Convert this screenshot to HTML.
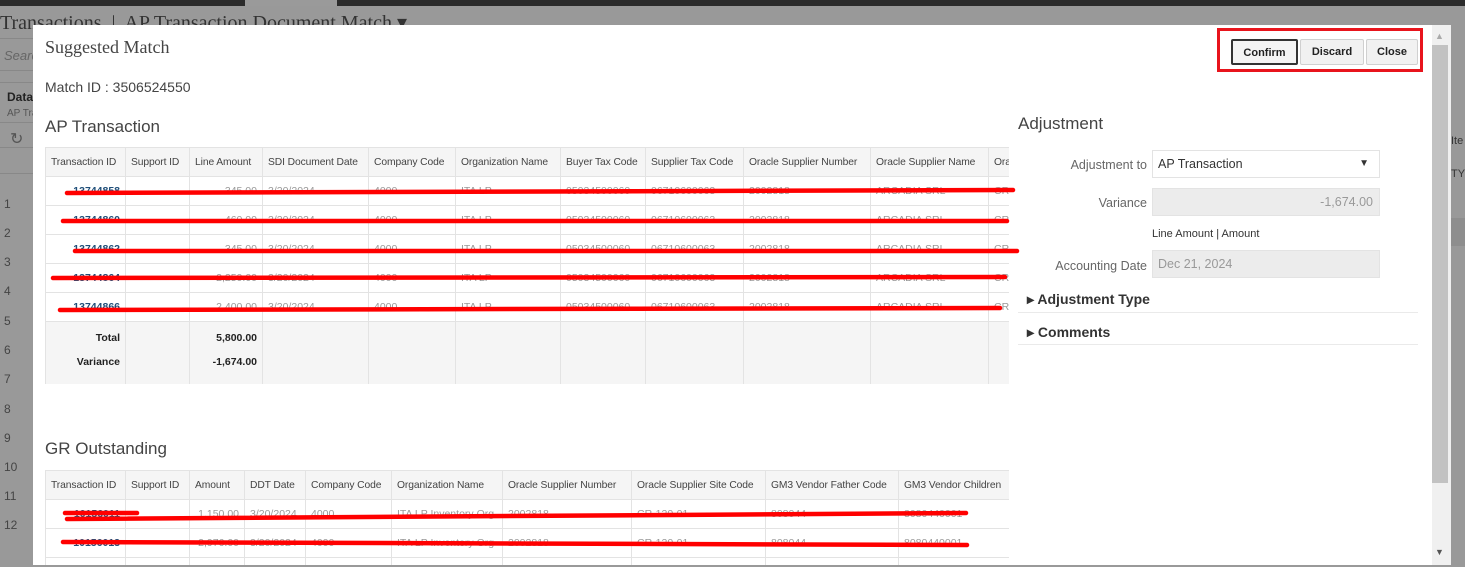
<!DOCTYPE html>
<html><head><meta charset="utf-8"><style>
*{box-sizing:border-box;margin:0;padding:0}
body{width:1465px;height:567px;overflow:hidden;background:#999;font-family:"Liberation Sans",sans-serif;position:relative;color:#333}
.a{position:absolute}
.topbar{left:0;top:0;width:1465px;height:6px;background:#2b2b2b}
.tab{left:245px;top:0;width:92px;height:6px;background:#9a9a9a}
.bgtitle{left:0;top:10px;font-family:"Liberation Serif",serif;font-size:20px;color:#333;white-space:nowrap}
.rn{left:4px;font-size:12px;color:#444}
.hl{left:0;width:33px;height:1px;background:#888}
.dlg{left:33px;top:25px;width:1418px;height:540px;background:#fff;overflow:hidden}
table{border-collapse:collapse;position:absolute;font-size:10.5px;color:#444;table-layout:fixed}
td,th{border:1px solid #e3e3e3;height:29px;padding:0 5px;white-space:nowrap;overflow:hidden;font-weight:normal;text-align:left}
th{background:#f5f5f5;font-size:10.3px;letter-spacing:-0.1px}
td{color:#999}
.blu{color:#1f4e79;font-weight:bold;text-align:right}
.r{text-align:right}
.ft td{background:#f5f5f5;border-top:none;border-bottom:none;color:#222}
.btn{top:14px;height:26px;border:1px solid #d0d0d0;background:#f1f1f1;font-size:11px;font-weight:bold;color:#222;text-align:center;line-height:24px;border-radius:2px}
.lbl{font-size:12.5px;color:#666;text-align:right;width:114px}
.fld{left:1119px;width:228px;height:28px;border:1px solid #e3e3e3;font-size:12.5px;padding-left:5px;line-height:26px}
</style></head><body>
<div class="a topbar"></div><div class="a tab"></div>
<div class="a bgtitle">Transactions &nbsp;|&nbsp; AP Transaction Document Match ▾</div>
<div class="a" style="left:4px;top:48px;font-size:13px;font-style:italic;color:#666">Search</div>
<div class="a hl" style="top:38px"></div><div class="a hl" style="top:70px"></div><div class="a hl" style="top:82px"></div>
<div class="a" style="left:7px;top:90px;font-size:12px;font-weight:bold;color:#222">Data</div>
<div class="a" style="left:7px;top:108px;font-size:10px;color:#555">AP Tra</div>
<div class="a hl" style="top:122px"></div>
<div class="a" style="left:10px;top:129px;font-size:16px;color:#555">↻</div>
<div class="a hl" style="top:147px"></div><div class="a hl" style="top:173px"></div>
<div class="a rn" style="top:197px">1</div><div class="a rn" style="top:226px">2</div><div class="a rn" style="top:255px">3</div><div class="a rn" style="top:284px">4</div><div class="a rn" style="top:314px">5</div><div class="a rn" style="top:343px">6</div><div class="a rn" style="top:372px">7</div><div class="a rn" style="top:402px">8</div><div class="a rn" style="top:431px">9</div><div class="a rn" style="top:460px">10</div><div class="a rn" style="top:489px">11</div><div class="a rn" style="top:518px">12</div>
<div class="a" style="left:1451px;top:135px;font-size:11px;color:#333">Ite</div>
<div class="a" style="left:1451px;top:168px;font-size:11px;color:#333">TY</div>
<div class="a" style="left:1451px;top:218px;width:14px;height:28px;background:#8e8e8e"></div>

<div class="a dlg">
<div class="a" style="left:12px;top:12px;font-family:'Liberation Serif',serif;font-size:18px;color:#444">Suggested Match</div>
<div class="a" style="left:12px;top:54px;font-size:14px;color:#444">Match ID : 3506524550</div>
<div class="a" style="left:12px;top:92px;font-size:17px;color:#444">AP Transaction</div>
<div class="a" style="left:12px;top:414px;font-size:17px;color:#444">GR Outstanding</div>

<div class="a" style="left:1184px;top:3px;width:206px;height:44px;border:3px solid #e8141c"></div>
<div class="a btn" style="left:1198px;width:67px;border:2px solid #333;background:#f4f4f4">Confirm</div>
<div class="a btn" style="left:1267px;width:64px">Discard</div>
<div class="a btn" style="left:1333px;width:52px">Close</div>

<div class="a" style="left:985px;top:89px;font-size:17px;color:#444">Adjustment</div>
<div class="a lbl" style="left:1000px;top:133px">Adjustment to</div>
<div class="a fld" style="top:125px;color:#333">AP Transaction<span style="position:absolute;right:10px;font-size:10px">▼</span></div>
<div class="a lbl" style="left:1000px;top:171px">Variance</div>
<div class="a fld" style="top:163px;background:#ececec;color:#999;text-align:right;padding-right:6px">-1,674.00</div>
<div class="a" style="left:1119px;top:203px;font-size:11px;color:#333">Line Amount | Amount</div>
<div class="a lbl" style="left:1000px;top:234px">Accounting Date</div>
<div class="a fld" style="top:225px;background:#ececec;color:#999">Dec 21, 2024</div>
<div class="a" style="left:994px;top:266px;font-size:14px;font-weight:bold;color:#333">▸ Adjustment Type</div>
<div class="a" style="left:985px;top:287px;width:400px;height:1px;background:#eaeaea"></div>
<div class="a" style="left:994px;top:299px;font-size:14px;font-weight:bold;color:#333">▸ Comments</div>
<div class="a" style="left:985px;top:319px;width:400px;height:1px;background:#eaeaea"></div>

<div class="a" style="left:1399px;top:0;width:19px;height:540px;background:#f0f0f0"></div>
<div class="a" style="left:1399px;top:20px;width:16px;height:438px;background:#c2c2c2"></div>
<div class="a" style="left:1402px;top:6px;font-size:9px;color:#aaa">▲</div>
<div class="a" style="left:1402px;top:522px;font-size:9px;color:#555">▼</div>

<div class="a" style="left:12px;top:122px;width:964px;height:237px;overflow:hidden">
<table style="left:0;top:0;width:1000px">
<colgroup><col style="width:80px"><col style="width:64px"><col style="width:73px"><col style="width:106px"><col style="width:87px"><col style="width:105px"><col style="width:85px"><col style="width:98px"><col style="width:127px"><col style="width:118px"><col style="width:57px"></colgroup>
<tr><th>Transaction ID</th><th>Support ID</th><th>Line Amount</th><th>SDI Document Date</th><th>Company Code</th><th>Organization Name</th><th>Buyer Tax Code</th><th>Supplier Tax Code</th><th>Oracle Supplier Number</th><th>Oracle Supplier Name</th><th>Oracle</th></tr>
<tr><td class="blu">13744858</td><td></td><td class="r">345.00</td><td>3/20/2024</td><td>4000</td><td>ITA LP</td><td>05034500060</td><td>06710600063</td><td>2002818</td><td>ARCADIA SRL</td><td>CR</td></tr>
<tr><td class="blu">13744860</td><td></td><td class="r">460.00</td><td>3/20/2024</td><td>4000</td><td>ITA LP</td><td>05034500060</td><td>06710600063</td><td>2002818</td><td>ARCADIA SRL</td><td>CR</td></tr>
<tr><td class="blu">13744862</td><td></td><td class="r">345.00</td><td>3/20/2024</td><td>4000</td><td>ITA LP</td><td>05034500060</td><td>06710600063</td><td>2002818</td><td>ARCADIA SRL</td><td>CR</td></tr>
<tr><td class="blu">13744864</td><td></td><td class="r">2,250.00</td><td>3/20/2024</td><td>4000</td><td>ITA LP</td><td>05034500060</td><td>06710600063</td><td>2002818</td><td>ARCADIA SRL</td><td>CR</td></tr>
<tr><td class="blu">13744866</td><td></td><td class="r">2,400.00</td><td>3/20/2024</td><td>4000</td><td>ITA LP</td><td>05034500060</td><td>06710600063</td><td>2002818</td><td>ARCADIA SRL</td><td>CR</td></tr>
<tr class="ft"><td class="r" style="font-weight:bold;height:28px;padding-top:4px">Total</td><td></td><td class="r" style="font-weight:bold;padding-top:4px">5,800.00</td><td></td><td></td><td></td><td></td><td></td><td></td><td></td><td></td></tr>
<tr class="ft"><td class="r" style="font-weight:bold;height:34px;vertical-align:top;padding-top:5px;border-bottom:1px solid #e3e3e3">Variance</td><td style="border-bottom:1px solid #e3e3e3"></td><td class="r" style="font-weight:bold;vertical-align:top;padding-top:5px;border-bottom:1px solid #e3e3e3">-1,674.00</td><td style="border-bottom:1px solid #e3e3e3"></td><td style="border-bottom:1px solid #e3e3e3"></td><td style="border-bottom:1px solid #e3e3e3"></td><td style="border-bottom:1px solid #e3e3e3"></td><td style="border-bottom:1px solid #e3e3e3"></td><td style="border-bottom:1px solid #e3e3e3"></td><td style="border-bottom:1px solid #e3e3e3"></td><td style="border-bottom:1px solid #e3e3e3"></td></tr>
</table></div>

<div class="a" style="left:12px;top:445px;width:964px;height:100px;overflow:hidden">
<table style="left:0;top:0;width:1000px">
<colgroup><col style="width:80px"><col style="width:64px"><col style="width:55px"><col style="width:61px"><col style="width:86px"><col style="width:111px"><col style="width:129px"><col style="width:134px"><col style="width:133px"><col style="width:147px"></colgroup>
<tr><th>Transaction ID</th><th>Support ID</th><th>Amount</th><th>DDT Date</th><th>Company Code</th><th>Organization Name</th><th>Oracle Supplier Number</th><th>Oracle Supplier Site Code</th><th>GM3 Vendor Father Code</th><th>GM3 Vendor Children</th></tr>
<tr><td class="blu">10156011</td><td></td><td class="r">1,150.00</td><td>3/20/2024</td><td>4000</td><td>ITA LP Inventory Org</td><td>2002818</td><td>CR-120-01</td><td>808044</td><td>8080440001</td></tr>
<tr><td class="blu">10156013</td><td></td><td class="r">2,976.00</td><td>3/20/2024</td><td>4000</td><td>ITA LP Inventory Org</td><td>2002818</td><td>CR-120-01</td><td>808044</td><td>8080440001</td></tr>
<tr><td></td><td></td><td></td><td></td><td></td><td></td><td></td><td></td><td></td><td></td></tr>
</table></div>
</div>

<svg class="a" style="left:0;top:0" width="1465" height="567"><g stroke="#f00" stroke-width="4.5" stroke-linecap="round" fill="none">
<path d="M67 193 L1013 190"/>
<path d="M63 221 L1007 221"/>
<path d="M75 251 L1017 251"/>
<path d="M53 278 L1005 277"/>
<path d="M60 310 L1000 308"/>
<path d="M65 513 L137 513"/>
<path d="M67 519 L966 513"/>
<path d="M63 542 L967 545"/>
</g></svg>
</body></html>
